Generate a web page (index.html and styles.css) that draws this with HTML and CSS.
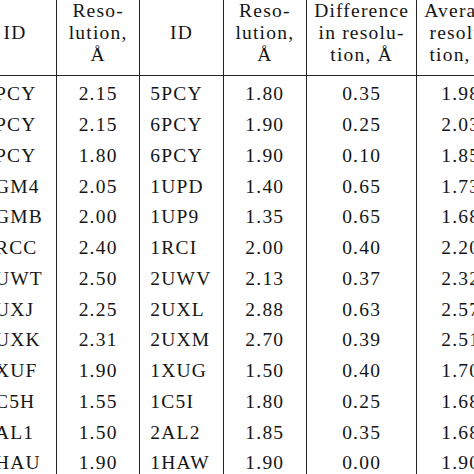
FILE: index.html
```html
<!DOCTYPE html>
<html>
<head>
<meta charset="utf-8">
<link rel="stylesheet" href="styles.css">
</head>
<body>
<div class="frame">
<table class="res">
<colgroup>
<col class="c1"><col class="c2"><col class="c3"><col class="c4"><col class="c5"><col class="c6">
</colgroup>
<thead>
<tr>
<th>ID</th>
<th>Reso-<br>lution,<br>Å</th>
<th>ID</th>
<th>Reso-<br>lution,<br>Å</th>
<th>Difference<br>in resolu-<br>tion, Å</th>
<th>Average<br>resolu-<br>tion, Å</th>
</tr>
</thead>
<tbody>
<tr class="first"><td class="id">1PCY</td><td>2.15</td><td class="id">5PCY</td><td>1.80</td><td>0.35</td><td>1.98</td></tr>
<tr><td class="id">1PCY</td><td>2.15</td><td class="id">6PCY</td><td>1.90</td><td>0.25</td><td>2.03</td></tr>
<tr><td class="id">4PCY</td><td>1.80</td><td class="id">6PCY</td><td>1.90</td><td>0.10</td><td>1.85</td></tr>
<tr><td class="id">1GM4</td><td>2.05</td><td class="id">1UPD</td><td>1.40</td><td>0.65</td><td>1.73</td></tr>
<tr><td class="id">1GMB</td><td>2.00</td><td class="id">1UP9</td><td>1.35</td><td>0.65</td><td>1.68</td></tr>
<tr><td class="id">1RCC</td><td>2.40</td><td class="id">1RCI</td><td>2.00</td><td>0.40</td><td>2.20</td></tr>
<tr><td class="id">2UWT</td><td>2.50</td><td class="id">2UWV</td><td>2.13</td><td>0.37</td><td>2.32</td></tr>
<tr><td class="id">2UXJ</td><td>2.25</td><td class="id">2UXL</td><td>2.88</td><td>0.63</td><td>2.57</td></tr>
<tr><td class="id">2UXK</td><td>2.31</td><td class="id">2UXM</td><td>2.70</td><td>0.39</td><td>2.51</td></tr>
<tr><td class="id">1XUF</td><td>1.90</td><td class="id">1XUG</td><td>1.50</td><td>0.40</td><td>1.70</td></tr>
<tr><td class="id">1C5H</td><td>1.55</td><td class="id">1C5I</td><td>1.80</td><td>0.25</td><td>1.68</td></tr>
<tr><td class="id">1AL1</td><td>1.50</td><td class="id">2AL2</td><td>1.85</td><td>0.35</td><td>1.68</td></tr>
<tr><td class="id">1HAU</td><td>1.90</td><td class="id">1HAW</td><td>1.90</td><td>0.00</td><td>1.90</td></tr>
</tbody>
</table>
</div>
</body>
</html>
```
FILE: styles.css
```css
html, body {
  margin: 0;
  padding: 0;
  background: #ffffff;
}
.frame {
  width: 474px;
  height: 474px;
  overflow: hidden;
  background: #ffffff;
}
.res {
  border-collapse: collapse;
  table-layout: fixed;
  width: 531.3px;
  margin-left: -27px;
  margin-top: -1px;
  font-family: "Liberation Serif", "Times New Roman", serif;
  font-size: 19.5px;
  letter-spacing: 1.2px;
  color: #151515;
}
.c1 { width: 83px; }
.c2 { width: 83.3px; }
.c3 { width: 83.4px; }
.c4 { width: 83.3px; }
.c5 { width: 110.3px; }
.c6 { width: 88px; }
.res th, .res td {
  border: 1.5px solid #222222;
  padding: 0;
  text-align: center;
  white-space: nowrap;
  overflow: hidden;
}
.res th {
  font-weight: normal;
  line-height: 22px;
  height: 66px;
  padding: 0 0 9px 0;
  vertical-align: middle;
}
.res td {
  border-top: none;
  border-bottom: none;
  height: 30.75px;
  line-height: 22px;
  vertical-align: middle;
}
.res td.id {
  text-align: left;
  padding-left: 10px;
}
.res tr.first td {
  padding-top: 3px;
}
```
